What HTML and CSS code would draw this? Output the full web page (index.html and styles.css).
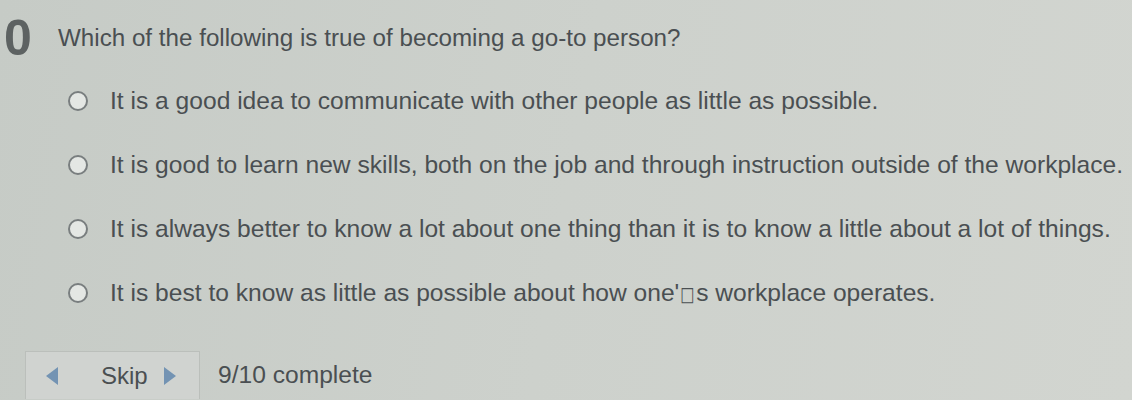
FILE: index.html
```html
<!DOCTYPE html>
<html>
<head>
<meta charset="utf-8">
<link rel="stylesheet" href="styles.css">
</head>
<body>
<div class="page">
  <div class="question">
    <div class="num">0</div>
    <div class="qtext">Which of the following is true of becoming a go-to person?</div>
  </div>
  <ul class="options">
    <li class="option"><span class="radio"></span><span class="label">It is a good idea to communicate with other people as little as possible.</span></li>
    <li class="option"><span class="radio"></span><span class="label">It is good to learn new skills, both on the job and through instruction outside of the workplace.</span></li>
    <li class="option"><span class="radio"></span><span class="label">It is always better to know a lot about one thing than it is to know a little about a lot of things.</span></li>
    <li class="option"><span class="radio"></span><span class="label">It is best to know as little as possible about how one'<span class="tofu">□</span>s workplace operates.</span></li>
  </ul>
  <div class="footer">
    <div class="skip">
      <span class="tri tri-left"></span>
      <span class="skiptext">Skip</span>
      <span class="tri tri-right"></span>
    </div>
    <div class="progress">9/10 complete</div>
  </div>
</div>
</body>
</html>
```
FILE: styles.css
```css
html, body {
  margin: 0;
  padding: 0;
}
body {
  background: linear-gradient(100deg, #c6cbc6 0%, #cdd1cc 50%, #d2d5d0 100%);
  font-family: "Liberation Sans", Arial, sans-serif;
  color: #4a4f52;
  width: 1132px;
  height: 400px;
  overflow: hidden;
}
.page {
  padding: 18px 0 0 0;
}
.question {
  display: flex;
  align-items: center;
}
.num {
  width: 58px;
  padding-left: 4px;
  box-sizing: border-box;
  font-size: 50px;
  font-weight: bold;
  line-height: 40px;
  color: #5d6262;
}
.qtext {
  font-size: 24.2px;
  line-height: 30px;
}
.options {
  list-style: none;
  margin: 11px 0 0 0;
  padding: 0 0 0 68px;
}
.option {
  display: flex;
  align-items: center;
  height: 64px;
}
.radio {
  width: 16px;
  height: 16px;
  border: 2px solid #797e7f;
  border-radius: 50%;
  background: #e4e7e4;
  flex: none;
}
.label {
  margin-left: 22px;
  font-size: 24.6px;
  white-space: nowrap;
}
.tofu {
  font-family: "DejaVu Sans", sans-serif;
  font-size: 20px;
  display: inline-block;
  transform: scaleX(0.75);
  margin: 0 -1px;
}
.footer {
  display: flex;
  align-items: center;
  margin-top: 26px;
  padding-left: 25px;
}
.skip {
  display: flex;
  align-items: center;
  width: 175px;
  height: 48px;
  box-sizing: border-box;
  border: 1px solid #bbbfbb;
  border-bottom: none;
  background: #d0d3d0;
  padding-left: 20px;
}
.tri {
  width: 0;
  height: 0;
  border-top: 9px solid transparent;
  border-bottom: 9px solid transparent;
}
.tri-left {
  border-right: 12px solid #7393b3;
}
.tri-right {
  border-left: 12px solid #7393b3;
}
.skiptext {
  font-size: 24px;
  margin: 0 16px 0 43px;
}
.progress {
  font-size: 24.6px;
  margin-left: 18px;
}
```
